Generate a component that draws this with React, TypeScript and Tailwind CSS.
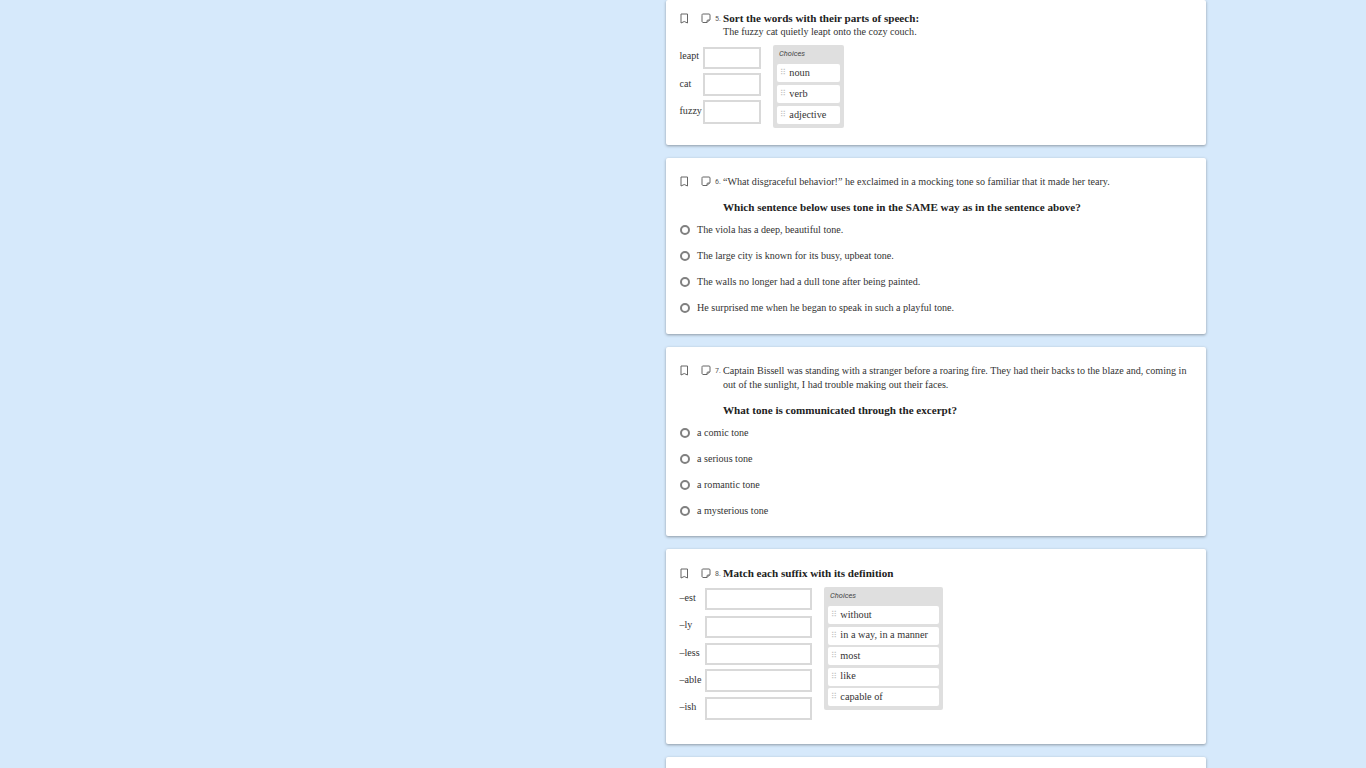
const serif = "font-['Liberation_Serif','DejaVu_Serif',serif]";

const BookmarkIcon = () => (
  <svg width="9" height="11" viewBox="0 0 9 11" fill="none" stroke="#666" strokeWidth="1" className="shrink-0 -mt-[1px]">
    <path d="M1 1h6.500v9l-3.250-1.500-3.250 1.500z" />
  </svg>
);

const NoteIcon = () => (
  <svg width="10" height="11" viewBox="0 0 10 11" fill="none" stroke="#666" strokeWidth="1" className="shrink-0 -mt-[1px]">
    <path d="M1.500 1h6.500a1 1 0 0 1 1 1v4.500l-3 3h-4a1.500 1.500 0 0 1-1-1v-6a1.500 1.500 0 0 1 .5-1.500z" />
    <path d="M6 9.500v-1.500a1 1 0 0 1 1-1h2" />
  </svg>
);

// icons + question number gutter, text starts at x=723
const Head = ({ n, children }: { n: number; children: React.ReactNode }) => (
  <div className="flex">
    <div className="flex w-[57px] shrink-0 h-[14px] items-center pl-[14px]">
      <BookmarkIcon />
      <span className="ml-[12px] flex"><NoteIcon /></span>
      <span className="ml-[4px] mt-[1px] text-[7px] text-[#555] font-['Roboto',sans-serif]">{n}.</span>
    </div>
    <div className="text-[10.100px] leading-[14px] text-[#333] pr-[16px]">{children}</div>
  </div>
);

const Options = ({ items }: { items: string[] }) => (
  <div className="flex flex-col gap-[12px] mt-[8px] pl-[14px]">
    {items.map((o) => (
      <div key={o} className="flex items-center h-[14px]">
        <span className="w-[10px] h-[10px] rounded-full border-2 border-[#808080] shrink-0" />
        <span className="ml-[7px] text-[10.100px] text-[#333]">{o}</span>
      </div>
    ))}
  </div>
);

const Choices = ({ items, gap, width }: { items: string[]; gap: string; width: string }) => (
  <div className={`${width} bg-[#dfdfdf] rounded-[2px] px-[4px] pt-[4px] pb-[4px]`}>
    <div className="h-[15px] pl-[2px] text-[7.500px] leading-[10px] italic text-[#444] font-['Roboto',sans-serif]">Choices</div>
    <div className={`flex flex-col ${gap}`}>
      {items.map((c) => (
        <div key={c} className="flex items-center h-[18px] bg-white rounded-[2px] pl-[3px]">
          <span className="text-[#c4c4c4] text-[8px] leading-none mr-[3.500px] font-['DejaVu_Sans',sans-serif]">⠿</span>
          <span className="text-[10.250px] whitespace-nowrap text-[#333] -mt-[1px]">{c}</span>
        </div>
      ))}
    </div>
  </div>
);

const Card = ({ height, pt, children }: { height: string; pt: string; children: React.ReactNode }) => (
  <div className={`w-[540px] ${height} ${pt} bg-white rounded-[2px] shadow-[0_1px_3px_rgba(0,0,0,0.35)] shrink-0`}>
    {children}
  </div>
);

type Row = { label: string; h: string; mb: string; pt: string };

const Blanks = ({ rows, labelW, inputW }: { rows: Row[]; labelW: string; inputW: string }) => (
  <div className="flex flex-col">
    {rows.map((r) => (
      <div key={r.label} className={`flex items-start ${r.mb}`}>
        <span className={`${labelW} ${r.pt} text-[10.100px] leading-[18px] text-[#333]`}>{r.label}</span>
        <span className={`${inputW} ${r.h} border-2 border-[#d9d9d9] bg-white`} />
      </div>
    ))}
  </div>
);

export default function App() {
  return (
    <div className={`h-screen overflow-hidden bg-[#d6e9fb] flex justify-end pr-[160px] ${serif}`}>
      <div className="flex flex-col gap-[13px]">
        <Card height="h-[145px]" pt="pt-[12px]">
          <Head n={5}>
            <div className="font-bold text-[11.100px] text-[#222] -mt-[1px]">Sort the words with their parts of speech:</div>
            <div>The fuzzy cat quietly leapt onto the cozy couch.</div>
          </Head>
          <div className="flex mt-[6px] pl-[13.500px]">
            <div className="pt-[2px]">
              <Blanks
                labelW="w-[23.500px]"
                inputW="w-[58px]"
                rows={[
                  { label: "leapt", h: "h-[22px]", mb: "mb-[4px]", pt: "pt-0" },
                  { label: "cat", h: "h-[23px]", mb: "mb-[4px]", pt: "pt-[2px]" },
                  { label: "fuzzy", h: "h-[24px]", mb: "", pt: "pt-[2px]" },
                ]}
              />
            </div>
            <div className="ml-[12px]">
              <Choices width="w-[71px]" gap="gap-[3px]" items={["noun", "verb", "adjective"]} />
            </div>
          </div>
        </Card>

        <Card height="h-[176px]" pt="pt-[17px]">
          <Head n={6}>
            “What disgraceful behavior!” he exclaimed in a mocking tone so familiar that it made her teary.
            <div className="font-bold text-[11.100px] text-[#222] mt-[11px] mb-[1px]">Which sentence below uses tone in the SAME way as in the sentence above?</div>
          </Head>
          <Options
            items={[
              "The viola has a deep, beautiful tone.",
              "The large city is known for its busy, upbeat tone.",
              "The walls no longer had a dull tone after being painted.",
              "He surprised me when he began to speak in such a playful tone.",
            ]}
          />
        </Card>

        <Card height="h-[189px]" pt="pt-[17px]">
          <Head n={7}>
            Captain Bissell was standing with a stranger before a roaring fire. They had their backs to the blaze and, coming in out of the sunlight, I had trouble making out their faces.
            <div className="font-bold text-[11.100px] text-[#222] mt-[11px] mb-[1px]">What tone is communicated through the excerpt?</div>
          </Head>
          <Options items={["a comic tone", "a serious tone", "a romantic tone", "a mysterious tone"]} />
        </Card>

        <Card height="h-[195px]" pt="pt-[18px]">
          <Head n={8}>
            <div className="font-bold text-[11.100px] text-[#222] -mt-[1px] mb-[1px]">Match each suffix with its definition</div>
          </Head>
          <div className="flex mt-[6px] pl-[13.500px]">
            <div className="pt-[1px]">
              <Blanks
                labelW="w-[25px]"
                inputW="w-[107.500px]"
                rows={[
                  { label: "–est", h: "h-[22px]", mb: "mb-[6px]", pt: "pt-[1px]" },
                  { label: "–ly", h: "h-[22px]", mb: "mb-[5px]", pt: "pt-0" },
                  { label: "–less", h: "h-[22px]", mb: "mb-[4px]", pt: "pt-[1px]" },
                  { label: "–able", h: "h-[23px]", mb: "mb-[5px]", pt: "pt-[2px]" },
                  { label: "–ish", h: "h-[23px]", mb: "", pt: "pt-[1px]" },
                ]}
              />
            </div>
            <div className="ml-[12px]">
              <Choices
                width="w-[119px]"
                gap="gap-[2.500px]"
                items={["without", "in a way, in a manner", "most", "like", "capable of"]}
              />
            </div>
          </div>
        </Card>

        <Card height="h-[60px]" pt="pt-0">
          <div />
        </Card>
      </div>
    </div>
  );
}
